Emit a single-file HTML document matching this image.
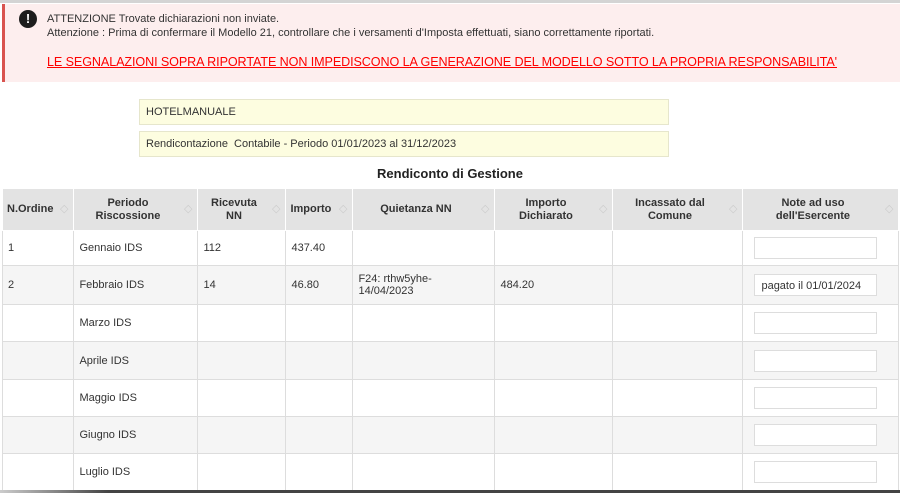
<!DOCTYPE html>
<html><head><meta charset="utf-8"><style>
*{box-sizing:border-box;margin:0;padding:0}
body{width:900px;height:493px;overflow:hidden;background:#fff;font-family:"Liberation Sans",sans-serif;color:#333;position:relative}
.top{position:absolute;left:0;top:0;width:900px;height:3px;background:#d4d4d4}
.alert{position:absolute;left:2px;top:4px;width:898px;height:78px;background:#fdeeee;border-left:3px solid #d9534f}
.ic{position:absolute;left:14px;top:6px;width:18px;height:18px;border-radius:50%;background:#1d1d1d;color:#fff;font-weight:bold;font-size:13px;text-align:center;line-height:18px}
.t1{position:absolute;left:42px;top:8px;font-size:11px;line-height:14px;color:#333}
.t2{position:absolute;left:42px;top:51px;font-size:12.6px;color:#f00;text-decoration:underline;letter-spacing:-0.1px}
.box{position:absolute;left:139px;width:530px;background:#fdfde0;border:1px solid #e6e6cc;font-size:11px;padding-left:6px}
h3{position:absolute;left:0;width:900px;top:166px;text-align:center;font-size:13px;color:#222;font-weight:bold}
table{position:absolute;left:2px;top:188px;border-collapse:collapse;font-size:11px;table-layout:fixed}
th{background:#e3e3e3;border:1px solid #fff;font-weight:bold;color:#333;height:42px;line-height:13px;position:relative;padding:0 20px 0 4px}
th:after{content:"◇";position:absolute;right:5px;top:14px;color:#ccc;font-size:11px;font-weight:normal}
td{border:1px solid #ddd;padding:0 5px;vertical-align:middle;line-height:12px}
tr.g td{background:#f5f5f5}
.in{width:123px;height:22px;border:1px solid #ddd;background:#fff;margin-left:6px;font-size:11px;padding:5px 6px}
.bot{position:absolute;left:0;top:490px;width:900px;height:3px;background:linear-gradient(90deg,#ccc,#444 12%,#444)}
</style></head><body>
<div class="top"></div>
<div class="alert"><div class="ic">!</div>
<div class="t1">ATTENZIONE Trovate dichiarazioni non inviate.<br>Attenzione : Prima di confermare il Modello 21, controllare che i versamenti d'Imposta effettuati, siano correttamente riportati.</div>
<div class="t2">LE SEGNALAZIONI SOPRA RIPORTATE NON IMPEDISCONO LA GENERAZIONE DEL MODELLO SOTTO LA PROPRIA RESPONSABILITA'</div></div>
<div class="box" style="top:99px;height:26px;line-height:24px">HOTELMANUALE</div>
<div class="box" style="top:131px;height:26px;line-height:24px">Rendicontazione&nbsp; Contabile - Periodo 01/01/2023 al 31/12/2023</div>
<h3>Rendiconto di Gestione</h3>
<table>
<colgroup><col style="width:70px"><col style="width:124px"><col style="width:88px"><col style="width:67px"><col style="width:142px"><col style="width:118px"><col style="width:130px"><col style="width:156px"></colgroup>
<tr><th style="text-align:left">N.Ordine</th><th>Periodo<br>Riscossione</th><th>Ricevuta<br>NN</th><th style="text-align:left">Importo</th><th>Quietanza NN</th><th>Importo<br>Dichiarato</th><th>Incassato dal<br>Comune</th><th>Note ad uso<br>dell'Esercente</th></tr>
<tr style="height:35px"><td>1</td><td>Gennaio IDS</td><td>112</td><td>437.40</td><td></td><td></td><td></td><td><div class="in"></div></td></tr>
<tr class="g" style="height:39px"><td>2</td><td>Febbraio IDS</td><td>14</td><td>46.80</td><td>F24: rthw5yhe-<br>14/04/2023</td><td>484.20</td><td></td><td><div class="in">pagato il 01/01/2024</div></td></tr>
<tr style="height:37px"><td></td><td>Marzo IDS</td><td></td><td></td><td></td><td></td><td></td><td><div class="in"></div></td></tr>
<tr class="g" style="height:38px"><td></td><td>Aprile IDS</td><td></td><td></td><td></td><td></td><td></td><td><div class="in"></div></td></tr>
<tr style="height:37px"><td></td><td>Maggio IDS</td><td></td><td></td><td></td><td></td><td></td><td><div class="in"></div></td></tr>
<tr class="g" style="height:37px"><td></td><td>Giugno IDS</td><td></td><td></td><td></td><td></td><td></td><td><div class="in"></div></td></tr>
<tr style="height:37px"><td></td><td>Luglio IDS</td><td></td><td></td><td></td><td></td><td></td><td><div class="in"></div></td></tr>
</table>
<div class="bot"></div>
</body></html>
